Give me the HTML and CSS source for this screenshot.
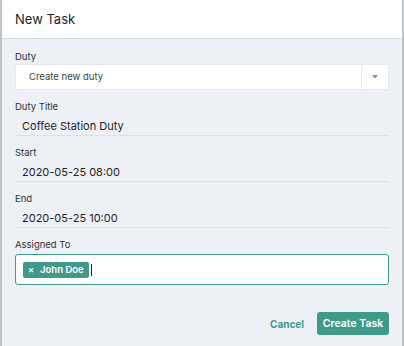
FILE: index.html
```html
<!DOCTYPE html>
<html lang="en">
<head>
<meta charset="UTF-8" />
<title>New Task</title>
<link rel="stylesheet" href="styles.css">
</head>
<body>

<div class="modal">
  <div class="modal-head">New Task</div>

  <div class="modal-body">
    <div class="field">
      <label>Duty</label>
      <div class="select">
        <span class="select-text">Create new duty</span>
        <span class="select-arrow"><svg width="6" height="4" viewBox="0 0 6 4"><path d="M0 0h6L3 3.5z" fill="#8a9097"/></svg></span>
      </div>
    </div>

    <div class="field">
      <label>Duty Title</label>
      <div class="value">Coffee Station Duty</div>
    </div>

    <div class="field">
      <label>Start</label>
      <div class="value">2020-05-25 08:00</div>
    </div>

    <div class="field">
      <label>End</label>
      <div class="value">2020-05-25 10:00</div>
    </div>

    <div class="field">
      <label>Assigned To</label>
      <div class="tags">
        <span class="tag"><span class="tag-x">×</span>John Doe</span>
        <span class="caret"></span>
      </div>
    </div>

    <div class="actions">
      <button class="btn-link">Cancel</button>
      <button class="btn">Create Task</button>
    </div>
  </div>
</div>

</body>
</html>
```

FILE: styles.css
```css
:root {
  --teal: #3f9a8a;
  --bg: #edf1f6;
  --line: #dce1e8;
  --txt: #1f2327;
}
* { margin:0; padding:0; box-sizing:border-box; }
body {
  font-family: 'Inter', 'Liberation Sans', sans-serif;
  background: #bfc3c8;
  width: 404px; height: 346px;
  overflow: hidden;
  color: var(--txt);
}
.modal {
  margin: 0 2px;
  height: 346px;
  background: var(--bg);
}
.modal-head {
  background: #fff;
  height: 39px;
  padding: 0 13px;
  font-size: 13px;
  line-height: 38px;
  border-bottom: 1px solid #d3d8df;
}
.modal-body { padding: 11px 13px 0; }
.field { margin-bottom: 10px; }
.field label {
  display: block;
  font-size: 9.5px;
  line-height: 14px;
  color: #2c3034;
}
.select {
  display: flex;
  height: 26px;
  background: #fff;
  border: 1px solid #e6eaef;
  border-radius: 2px;
  margin-bottom: 10px;
}
.select-text {
  flex: 1;
  font-size: 9.5px;
  line-height: 24px;
  padding-left: 13px;
  color: #3a3e42;
}
.select-arrow {
  width: 27px;
  border-left: 1px solid #e6eaef;
  display: flex; align-items: center; justify-content: center;
}
.value {
  height: 22px;
  padding: 4px 0 0 7px;
  font-size: 11px;
  line-height: 16px;
  border-bottom: 1px solid var(--line);
}
.tags {
  display: flex; align-items: center; gap: 2px;
  height: 31px;
  margin-top: 2px;
  background: #fff;
  border: 1px solid var(--teal);
  border-radius: 3px;
  padding: 0 7px;
}
.tag {
  background: var(--teal);
  color: #fff;
  font-size: 9.5px;
  font-weight: 600;
  height: 16px;
  line-height: 16px;
  padding: 0 5px;
  border-radius: 2px;
}
.tag-x { font-size: 9px; margin-right: 6px; }
.caret { width: 1px; height: 12px; background: #222; }
.actions {
  display: flex; justify-content: flex-end; align-items: center;
  gap: 13px;
  margin-top: 27px;
}
.btn-link {
  background: none; border: none;
  color: var(--teal);
  font-family: inherit; font-size: 10px; font-weight: 700;
}
.btn {
  background: var(--teal); color: #fff;
  border: none; border-radius: 3px;
  font-family: inherit; font-size: 10.5px; font-weight: 600;
  width: 72px; height: 23px;
}
```
